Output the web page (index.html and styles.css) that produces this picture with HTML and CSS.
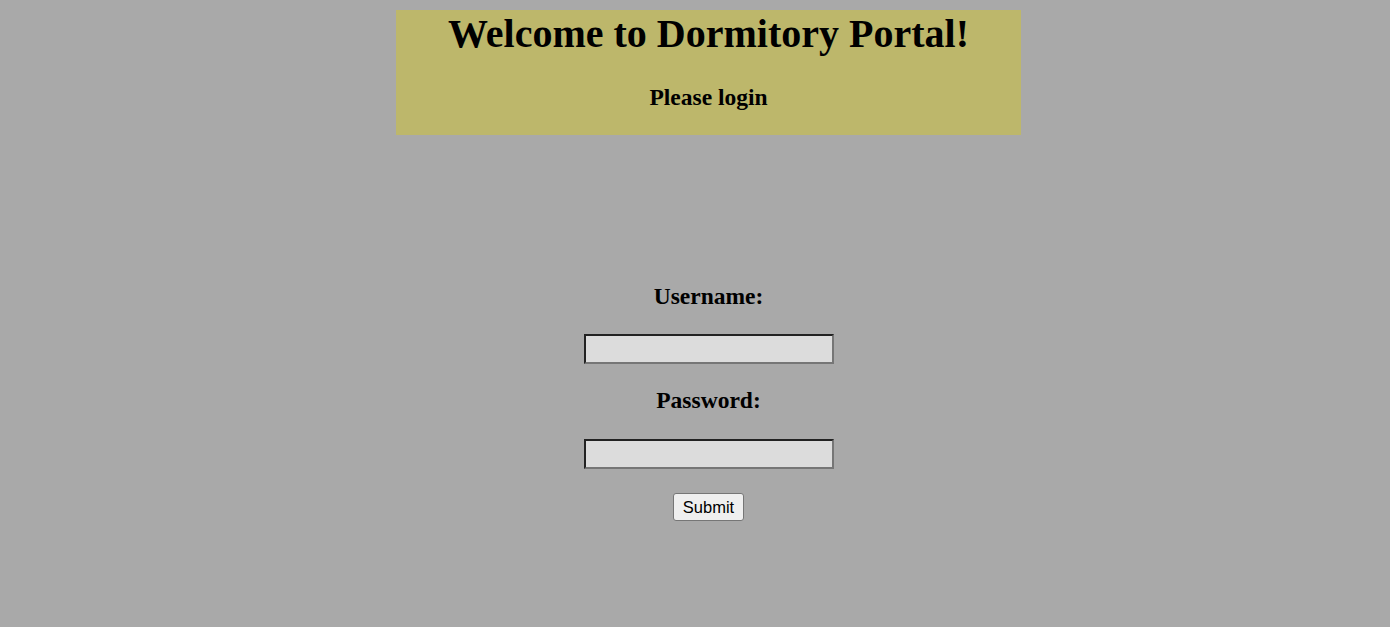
FILE: index.html
```html
<!DOCTYPE html>
<html>
<head>
<meta charset="utf-8">
<title>Dormitory Portal</title>
<link rel="stylesheet" href="styles.css">
</head>
<body>
<div class="page">
  <header class="banner">
    <h1 class="title">Welcome to Dormitory Portal!</h1>
    <h2 class="subtitle">Please login</h2>
  </header>
  <form class="login" onsubmit="return false;">
    <label class="field-label" for="username">Username:</label>
    <input class="field-input" id="username" type="text">
    <label class="field-label pw" for="password">Password:</label>
    <input class="field-input pw-input" id="password" type="password">
    <button class="submit" type="submit">Submit</button>
  </form>
</div>
</body>
</html>
```

FILE: styles.css
```css
html, body {
  margin: 0;
  padding: 0;
  background: #a9a9a9;
  height: 100%;
}
body {
  font-family: "Liberation Serif", "Times New Roman", serif;
  color: #000;
}
.page {
  padding-left: 27px;
  padding-top: 10px;
  display: flex;
  flex-direction: column;
  align-items: center;
}
.banner {
  width: 625px;
  background: #bdb76b;
  display: flex;
  flex-direction: column;
  align-items: center;
  padding-top: 2px;
  padding-bottom: 24px;
}
.title {
  margin: 0;
  font-size: 40px;
  line-height: 44px;
  font-weight: bold;
}
.subtitle {
  margin: 27px 0 0;
  font-size: 23.5px;
  line-height: 28px;
  font-weight: bold;
}
.login {
  display: flex;
  flex-direction: column;
  align-items: center;
  margin-top: 147px;
}
.field-label {
  display: block;
  font-size: 23.5px;
  line-height: 28px;
  font-weight: bold;
}
.field-label.pw {
  margin-top: 22px;
}
.field-input {
  box-sizing: border-box;
  width: 250px;
  height: 30px;
  margin: 24px 0 0;
  padding: 1px 2px;
  background: #dcdcdc;
  border-style: solid;
  border-width: 2px;
  border-color: #222 #767676 #767676 #222;
  font-family: "Liberation Sans", Arial, sans-serif;
  font-size: 13px;
  outline: none;
}
.field-input.pw-input {
  margin-top: 25px;
}
.submit {
  box-sizing: border-box;
  margin-top: 24px;
  height: 28px;
  padding: 0 9px;
  font-family: "Liberation Sans", Arial, sans-serif;
  font-size: 16.5px;
  color: #000;
  background: #efefef;
  border: 1px solid #767676;
  border-radius: 3px;
}
```
